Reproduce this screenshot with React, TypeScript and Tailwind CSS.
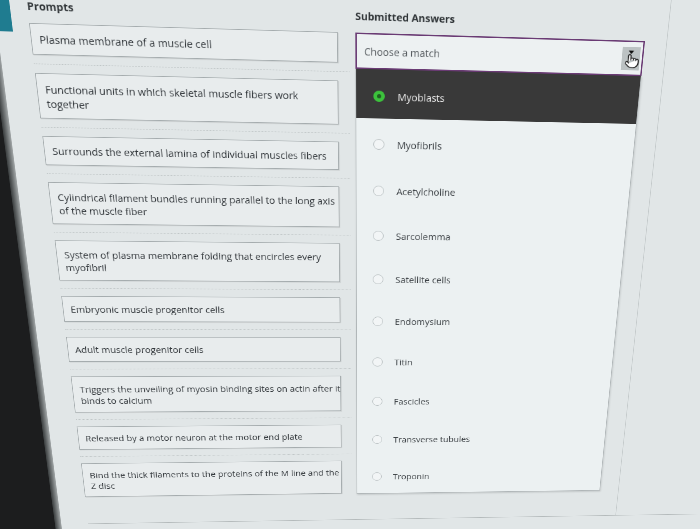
import React, { Fragment } from "react";
import { Pointer } from "lucide-react";

const prompts: string[][] = [
  ["Plasma membrane of a muscle cell"],
  ["Functional units in which skeletal muscle fibers work", "together"],
  ["Surrounds the external lamina of individual muscles fibers"],
  ["Cylindrical filament bundles running parallel to the long axis", "of the muscle fiber"],
  ["System of plasma membrane folding that encircles every", "myofibril"],
  ["Embryonic muscle progenitor cells"],
  ["Adult muscle progenitor cells"],
  ["Triggers the unveiling of myosin binding sites on actin after it", "binds to calcium"],
  ["Released by a motor neuron at the motor end plate"],
  ["Bind the thick filaments to the proteins of the M line and the", "Z disc"],
];

const answers = [
  "Myoblasts",
  "Myofibrils",
  "Acetylcholine",
  "Sarcolemma",
  "Satellite cells",
  "Endomysium",
  "Titin",
  "Fascicles",
  "Transverse tubules",
  "Troponin",
];

function PromptCard({ lines }: { lines: string[] }) {
  const tall = lines.length > 1;
  return (
    <div
      className={
        tall
          ? "w-[408px] h-[63px] border border-[#a5acae] bg-[#e8eced] px-[10px] pt-[2px] flex flex-col justify-center text-[14px] leading-[20px] text-[#32373b] whitespace-nowrap shadow-[1px_1px_1px_rgba(0,0,0,0.1)]"
          : "w-[408px] h-[42px] border border-[#a5acae] bg-[#e8eced] px-[10px] pt-[2px] flex flex-col justify-center text-[14px] leading-[20px] text-[#32373b] whitespace-nowrap shadow-[1px_1px_1px_rgba(0,0,0,0.1)]"
      }
    >
      {lines.map((l) => (
        <div key={l}>{l}</div>
      ))}
    </div>
  );
}

function AnswerRow({ label, selected }: { label: string; selected: boolean }) {
  if (selected) {
    return (
      <div className="h-[70px] flex items-center pl-[24px] pt-[6px] gap-[18px] bg-[#393939]">
        <div className="w-[16px] h-[16px] rounded-full bg-[#3cc23c] flex items-center justify-center">
          <div className="w-[6px] h-[6px] rounded-full bg-[#1f5f22]" />
        </div>
        <span className="text-[14px] text-[#ececec]">{label}</span>
      </div>
    );
  }
  return (
    <div className="h-[70px] flex items-center pl-[24px] pt-[6px] gap-[18px]">
      <div className="w-[16px] h-[16px] rounded-full border border-[#b9c0c2] bg-[#f2f5f6]" />
      <span className="text-[14px] text-[#3c4145]">{label}</span>
    </div>
  );
}

export default function App() {
  return (
    <div className="w-[700px] h-[529px] overflow-hidden bg-[#1c1d1e] font-['Open_Sans',sans-serif]">
      <div className="w-[1300px] h-[1000px] shrink-0 flex origin-top-left [transform:matrix3d(0.806731,0.02518,0,0.00007256,0.100771,0.791236,0,0.00027741,0,0,1,0,-107.1585,-43.5503,0,1)]">
        <div className="w-[108px] shrink-0 bg-[#1c1d1e]" />
        <div className="w-[10px] shrink-0 bg-linear-to-r from-[#3a3e3f] to-[#a3a8a9]" />
        <div className="flex-1 flex bg-[#e1e6e7]">
          <div className="w-[42px] shrink-0 pt-[20px]">
            <div className="w-[20px] h-[72px] bg-[#1f7c90]" />
          </div>
          <div className="flex-1 flex flex-col">
            <div className="h-[882px] flex border-b border-[#b4babb]">
              <div className="w-[838px] shrink-0 pt-[47px] flex gap-[8px]">
                <div className="w-[424px] shrink-0">
                  <div className="h-[21px] mb-[12px] text-[14px] leading-[21px] font-bold text-[#2f3437]">
                    Prompts
                  </div>
                  {prompts.map((p, i) => (
                    <Fragment key={i}>
                      {i > 0 && (
                        <div className="h-[25px] flex items-center">
                          <div className="w-full border-t border-dotted border-[#bfc5c6]" />
                        </div>
                      )}
                      <PromptCard lines={p} />
                    </Fragment>
                  ))}
                </div>
                <div className="w-[406px] shrink-0">
                  <div className="h-[21px] mb-[12px] text-[14px] leading-[21px] font-bold text-[#2f3437]">
                    Submitted Answers
                  </div>
                  <div className="h-[50px] border-2 border-[#6a3b74] bg-[#edf1f2] flex items-center justify-between pl-[10px] pr-[3px]">
                    <span className="text-[14px] text-[#54595d]">Choose a match</span>
                    <div className="relative w-[26px] h-[33px] bg-[#bcc2c3] flex justify-center pt-[5px]">
                      <svg width="8" height="5" viewBox="0 0 8 5">
                        <path d="M0 0h8L4 5z" fill="#111" />
                      </svg>
                      <Pointer
                        className="absolute left-[4px] top-[9px]"
                        size={22}
                        fill="#ffffff"
                        color="#222222"
                        strokeWidth={1.6}
                      />
                    </div>
                  </div>
                  <div className="border border-t-0 border-[#b0b6b8] bg-[#ecf1f2] shadow-[1px_2px_3px_rgba(0,0,0,0.15)]">
                    {answers.map((a, i) => (
                      <AnswerRow key={a} label={a} selected={i === 0} />
                    ))}
                  </div>
                </div>
              </div>
              <div className="w-[31px] shrink-0" />
              <div className="flex-1 border-l border-[#c3c9ca]" />
            </div>
          </div>
        </div>
      </div>
    </div>
  );
}
